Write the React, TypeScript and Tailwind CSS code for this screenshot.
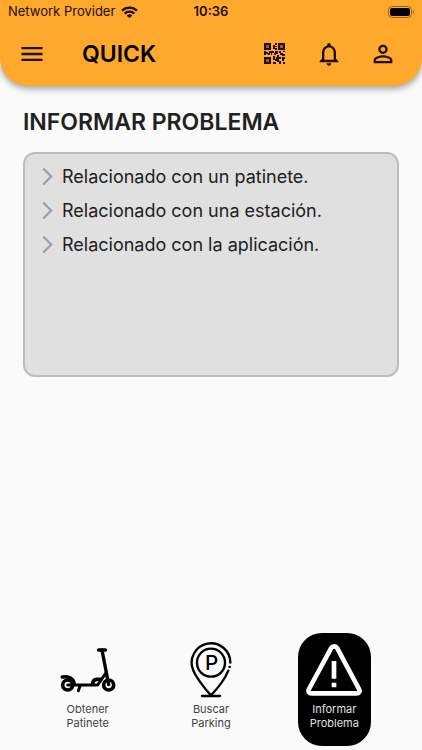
import React from "react";
import {
  MdArrowForwardIos,
  MdMenu,
  MdNotificationsNone,
  MdPersonOutline,
} from "react-icons/md";

const problems = [
  "Relacionado con un patinete.",
  "Relacionado con una estación.",
  "Relacionado con la aplicación.",
];

const WifiIcon = () => (
  <svg viewBox="0 0 51 36" className="w-[17px] h-3" aria-hidden="true">
    <g fill="none" stroke="currentColor" strokeWidth="7">
      <path d="M3 14a32 32 0 0 1 45 0" />
      <path d="M11 23a20.500 20.500 0 0 1 29 0" />
    </g>
    <path d="M17 29a12 12 0 0 1 17 0l-8.500 7z" fill="currentColor" />
  </svg>
);

const BatteryIcon = () => (
  <svg viewBox="0 0 26 12" className="w-[26px] h-3" aria-hidden="true">
    <rect
      x="0.5"
      y="0.5"
      width="23"
      height="11"
      rx="3.500"
      fill="none"
      stroke="currentColor"
      opacity="0.45"
    />
    <rect x="2" y="2" width="20" height="8" rx="2" fill="#000" />
    <path d="M25 4v4c1.300-.6 1.300-3.400 0-4z" fill="currentColor" opacity="0.5" />
  </svg>
);

const QrIcon = () => (
  <svg viewBox="0 0 28 28" className="w-7 h-7" aria-hidden="true">
    <g transform="translate(3 3)" fill="currentColor">
      <g fillRule="evenodd">
        <path d="M0 0h7v7H0zM2 2v3h3V2z" />
        <path d="M14 0h7v7h-7zM16 2v3h3V2z" />
        <path d="M0 14h7v7H0zM2 16v3h3v-3z" />
      </g>
      <g opacity="0.45">
        <path d="M2 2h3v3H2zM16 2h3v3h-3zM2 16h3v3H2z" />
      </g>
      <path d="M11 0h2v2h-2zM9 2h2v1h2v1h-2v2H9zM11 5h2v2h-2z" />
      <path d="M0 8h2v1h2v2H2v1H0zM4 10h2v2H4zM5 8h5v2H8v2H7v-2H5zM10 10h2v2h-2zM11 8h3v3h-2v-1h-1zM15 8h2v2h-2zM16 10h3v1h2v2h-3v-1h-2zM19 8h2v1h-2z" />
      <path d="M9 13h2v3h2v2h-2v-1H9zM13 12h2v2h2v2h-2v3h-2v-3h-1v-2h1zM9 19h3v2H9zM15 18h2v3h-2zM18 14h3v2h-1v2h-2zM19 19h2v2h-2z" />
    </g>
  </svg>
);

const ScooterIcon = () => (
  <svg viewBox="0 0 168 168" className="w-14 h-14" aria-hidden="true">
    <g
      fill="none"
      stroke="currentColor"
      strokeWidth="11"
      strokeLinecap="round"
      strokeLinejoin="round"
    >
      <circle cx="23" cy="129" r="15" />
      <circle cx="146" cy="129" r="15" />
      <path d="M116 24h20" />
      <path d="M126 24l20 104" strokeWidth="10" />
      <path d="M23 129h90l26-38" strokeWidth="9" />
      <path d="M7 105c16-3 31 3 35 18" />
      <path d="M98 125c0-8 5-13 12-13h12" />
      <path d="M60 132l-5 14" strokeWidth="9" />
    </g>
  </svg>
);

const ParkingIcon = () => (
  <svg viewBox="0 0 168 168" className="w-14 h-14" aria-hidden="true">
    <g
      fill="none"
      stroke="currentColor"
      strokeWidth="7"
      strokeLinecap="round"
      strokeLinejoin="round"
    >
      <path d="M142 62a58 58 0 1 0-112 21c6 18 34 56 54 77 18-19 42-49 52-74" />
      <circle cx="84" cy="62" r="42" />
      <path d="M57 162h54" />
    </g>
    <circle cx="140" cy="75" r="4" fill="currentColor" />
    <text
      x="86"
      y="85"
      textAnchor="middle"
      fontFamily="Inter, sans-serif"
      fontSize="62"
      fontWeight="500"
      fill="currentColor"
    >
      P
    </text>
  </svg>
);

const WarningIcon = () => (
  <svg viewBox="0 0 168 168" className="w-14 h-14" aria-hidden="true">
    <path
      d="M75 19c5-8 14-8 19 0l65 122c4 8 0 13-8 13H17c-8 0-12-5-8-13z"
      fill="none"
      stroke="currentColor"
      strokeWidth="14"
      strokeLinejoin="round"
    />
    <path d="M77 57h14v53H77zM77 122h14v14H77z" fill="currentColor" />
  </svg>
);

const tabs = [
  { id: "get", label: ["Obtener", "Patinete"], icon: <ScooterIcon /> },
  { id: "parking", label: ["Buscar", "Parking"], icon: <ParkingIcon /> },
  { id: "report", label: ["Informar", "Problema"], icon: <WarningIcon />, active: true },
];

const Header = () => (
  <header className="bg-[#ffa92c] rounded-b-[28px] shadow-[0_3px_6px_rgba(0,0,0,0.35)] text-[#210d04]">
    <div className="grid grid-cols-3 items-center h-6 px-2 text-[13px]">
      <div className="flex items-center gap-[6px] whitespace-nowrap">
        <span>Network Provider</span>
        <WifiIcon />
      </div>
      <span className="text-center font-semibold">10:36</span>
      <div className="flex justify-end">
        <BatteryIcon />
      </div>
    </div>
    <div className="flex items-center h-[62px] pb-[2px] pl-[18px] pr-[25px]">
      <button type="button" aria-label="Menú">
        <MdMenu className="w-7 h-7" />
      </button>
      <span className="ml-9 text-[23px] font-semibold text-black">QUICK</span>
      <div className="ml-auto flex items-center gap-[26px]">
        <button type="button" aria-label="Escanear código">
          <QrIcon />
        </button>
        <button type="button" aria-label="Notificaciones">
          <MdNotificationsNone className="w-7 h-7" />
        </button>
        <button type="button" aria-label="Perfil">
          <MdPersonOutline className="w-7 h-7" />
        </button>
      </div>
    </div>
  </header>
);

const App = () => {
  return (
    <div className="flex flex-col min-h-screen bg-[#fafafa] font-['Inter',sans-serif] text-[#212121]">
      <Header />

      <main className="flex-1 px-[23px] pt-5">
        <h1 className="text-[23px] leading-8 font-semibold">INFORMAR PROBLEMA</h1>
        <ul className="mt-[14px] min-h-[225px] rounded-xl border-2 border-[#bdbdbd] bg-[#e0e0e0] px-3 py-[5px]">
          {problems.map((problem) => (
            <li key={problem}>
              <button
                type="button"
                className="flex items-center gap-1 w-full h-[34px] text-left text-[18px]"
              >
                <MdArrowForwardIos className="w-[21px] h-[21px] text-[#9e9e9e]" />
                <span>{problem}</span>
              </button>
            </li>
          ))}
        </ul>
      </main>

      <nav className="grid grid-cols-3 px-[26px] pb-1">
        {tabs.map(({ id, label, icon, active }) => (
          <button
            key={id}
            type="button"
            className={`flex flex-col items-center justify-self-center w-[73px] h-[113px] pt-[9px] rounded-3xl ${
              active ? "bg-black text-white" : "text-black"
            }`}
          >
            {icon}
            <span
              className={`mt-1 text-[11px] leading-[14px] ${
                active ? "text-[#e0e0e0]" : "text-[#424242]"
              }`}
            >
              {label[0]}
              <br />
              {label[1]}
            </span>
          </button>
        ))}
      </nav>
    </div>
  );
};

export default App;
